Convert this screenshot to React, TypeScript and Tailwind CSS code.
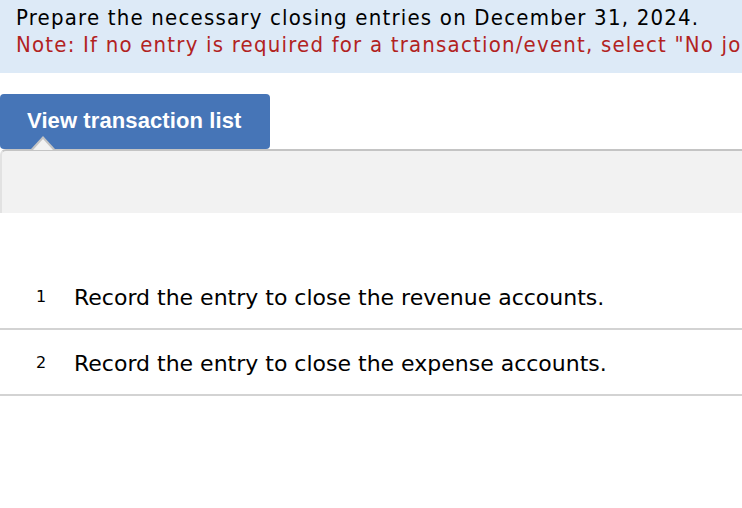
export default function App() {
  const steps = [
    'Record the entry to close the revenue accounts.',
    'Record the entry to close the expense accounts.',
  ]

  return (
    <div className="w-[742px] h-[508px] overflow-hidden bg-white font-['DejaVu_Sans',Verdana,sans-serif]">
      <div className="h-[73px] bg-[#ddeaf7] pl-4 pt-[4px] overflow-hidden whitespace-nowrap [font-stretch:condensed] font-['DejaVu_Sans_Condensed','DejaVu_Sans',sans-serif] text-[22px] leading-[27px] tracking-[1.2px]">
        <p className="text-black">Prepare the necessary closing entries on December 31, 2024.</p>
        <p className="text-[#b2231f]">
          Note: If no entry is required for a transaction/event, select "No journal entry required" in the first account field.
        </p>
      </div>

      <div className="mt-[21px]">
        <button className="h-[55px] w-[270px] rounded-[4px] bg-[#4675b7] text-left pl-[27px] pb-[2px] text-white font-bold text-[22px] tracking-[0.1px] font-['Liberation_Sans',Arial,sans-serif]">
          View transaction list
        </button>
        <div className="relative">
          <div className="absolute -top-[13px] left-[31px] w-0 h-0 border-x-[12px] border-x-transparent border-b-[13px] border-b-[#c4c4c4]" />
          <div className="absolute -top-[10px] left-[33px] w-0 h-0 border-x-[10px] border-x-transparent border-b-[11px] border-b-[#f2f2f2]" />
          <div className="h-[64px] bg-[#f2f2f2] border-t-2 border-l-2 border-[#c4c4c4] rounded-tl-[6px] border-l-[#e2e2e2]" />
        </div>
      </div>

      <div className="mt-[51px]">
        {steps.map((s, i) => (
          <div key={i} className="flex items-center h-[66px] border-b-2 border-[#d3d3d3] pt-[2px]">
            <span className="w-[74px] pl-9 text-[16px] text-black">{i + 1}</span>
            <span className="text-[22px] text-black">{s}</span>
          </div>
        ))}
      </div>
    </div>
  )
}
